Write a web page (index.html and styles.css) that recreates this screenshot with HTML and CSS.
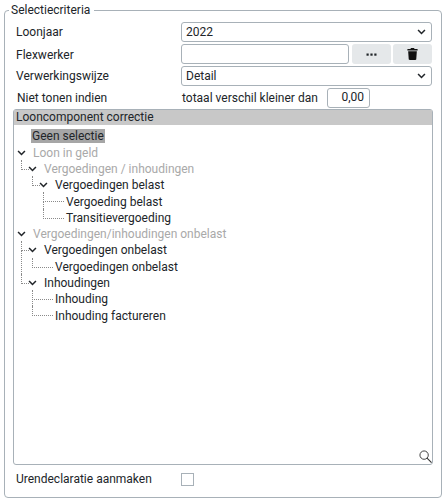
FILE: index.html
```html
<!DOCTYPE html>
<html lang="nl">
<head>
<meta charset="utf-8">
<title>Selectiecriteria</title>
<link rel="stylesheet" href="styles.css">
</head>
<body>
<fieldset class="criteria">
  <legend>Selectiecriteria</legend>
  <div class="rows">
    <div class="row">
      <label class="lbl">Loonjaar</label>
      <div class="select-wrap">
        <select class="field"><option>2022</option></select>
        <svg class="chev" viewBox="0 0 10 7"><path d="M1 1.2 5 5.2 9 1.2" fill="none" stroke="#212529" stroke-width="1.8"/></svg>
      </div>
    </div>
    <div class="row">
      <label class="lbl lbl-low">Flexwerker</label>
      <div class="flex-ctl">
        <input class="field grow" type="text">
        <button class="btn" type="button"><svg width="11" height="3" viewBox="0 0 11 3"><g fill="#212529"><rect x="0.5" y="0.5" width="2.2" height="2.2"/><rect x="4.4" y="0.5" width="2.2" height="2.2"/><rect x="8.3" y="0.5" width="2.2" height="2.2"/></g></svg></button>
        <button class="btn" type="button"><svg width="11" height="12" viewBox="0 0 11 13"><path fill="#111" d="M3.8 0h3.4l.5 1H11v1.6H0V1h3.3zM.8 3.6h9.4l-.6 8.4c0 .6-.5 1-1 1H2.400c-.5 0-1-.4-1-1z"/></svg></button>
      </div>
    </div>
    <div class="row">
      <label class="lbl">Verwerkingswijze</label>
      <div class="select-wrap">
        <select class="field"><option>Detail</option></select>
        <svg class="chev" viewBox="0 0 10 7"><path d="M1 1.200 5 5.200 9 1.200" fill="none" stroke="#212529" stroke-width="1.8"/></svg>
      </div>
    </div>
    <div class="row">
      <label class="lbl lbl-shift">Niet tonen indien</label>
      <div class="flex-ctl">
        <span class="diff">totaal verschil kleiner dan</span>
        <input class="field amount" type="text" value="0,00">
      </div>
    </div>
  </div>
  <section class="panel">
    <header class="panel-head">Looncomponent correctie</header>
    <div class="panel-body">
      <div class="none-row"><span class="none">Geen selectie</span></div>
      <ul class="tree">
        <li><div class="node off"><svg class="tw" viewBox="0 0 10 7"><path d="M1 1.200 5 5.200 9 1.200"/></svg>Loon in geld</div>
          <ul>
            <li class="last"><div class="node off"><svg class="tw" viewBox="0 0 10 7"><path d="M1 1.200 5 5.200 9 1.200"/></svg>Vergoedingen / inhoudingen</div>
              <ul>
                <li class="last"><div class="node"><svg class="tw" viewBox="0 0 10 7"><path d="M1 1.200 5 5.200 9 1.200"/></svg>Vergoedingen belast</div>
                  <ul>
                    <li class="leaf"><div class="node">Vergoeding belast</div></li>
                    <li class="leaf last"><div class="node">Transitievergoeding</div></li>
                  </ul>
                </li>
              </ul>
            </li>
          </ul>
        </li>
        <li><div class="node off"><svg class="tw" viewBox="0 0 10 7"><path d="M1 1.200 5 5.200 9 1.200"/></svg>Vergoedingen/inhoudingen onbelast</div>
          <ul>
            <li><div class="node"><svg class="tw" viewBox="0 0 10 7"><path d="M1 1.200 5 5.200 9 1.200"/></svg>Vergoedingen onbelast</div>
              <ul>
                <li class="leaf last"><div class="node">Vergoedingen onbelast</div></li>
              </ul>
            </li>
            <li class="last"><div class="node"><svg class="tw" viewBox="0 0 10 7"><path d="M1 1.200 5 5.200 9 1.200"/></svg>Inhoudingen</div>
              <ul>
                <li class="leaf"><div class="node">Inhouding</div></li>
                <li class="leaf last"><div class="node">Inhouding factureren</div></li>
              </ul>
            </li>
          </ul>
        </li>
      </ul>
      <svg class="search" width="13" height="13" viewBox="0 0 14 14"><circle cx="5.500" cy="5.500" r="4.500" fill="none" stroke="#333" stroke-width="1"/><path d="M8.700 8.700 13.500 13.500" stroke="#333" stroke-width="1.200"/></svg>
    </div>
  </section>
  <div class="row foot">
    <label class="lbl">Urendeclaratie aanmaken</label>
    <input class="check" type="checkbox">
  </div>
</fieldset>
</body>
</html>
```
FILE: styles.css
```css
* { box-sizing: border-box; }
html, body { margin: 0; padding: 0; background: #fff; }
body {
  width: 447px;
  height: 503px;
  overflow: hidden;
  padding: 3px 5px 5px 4px;
  font: 12px/14px Roboto, "Liberation Sans", sans-serif;
  color: #212529;
}
.criteria {
  margin: 0;
  height: 495px;
  padding: 0 8px 0 8px;
  border: 1px solid #a8b1b8;
  border-radius: 4px;
  display: flex;
  flex-direction: column;
  min-width: 0;
}
.criteria legend {
  margin-left: -4px;
  padding: 0 4px 0 2px;
  font-size: 12px;
  line-height: 14px;
}
.rows {
  display: flex;
  flex-direction: column;
  gap: 2px;
  padding-top: 5px;
}
.row {
  display: flex;
  align-items: center;
  height: 20px;
}
.lbl {
  width: 168px;
  flex: none;
  padding-left: 3px;
}
.lbl-shift { padding-left: 4px; }
.lbl-low { margin-top: 2px; }
.select-wrap {
  position: relative;
  width: 251px;
  height: 20px;
}
.field {
  height: 20px;
  border: 1px solid #a8b1b8;
  border-radius: 3px;
  background: #fff;
  font: inherit;
  color: inherit;
  padding: 0 4px;
  margin: 0;
  outline: none;
}
select.field {
  appearance: none;
  width: 100%;
}
.chev {
  position: absolute;
  right: 6px;
  top: 7px;
  width: 9px;
  height: 6px;
  pointer-events: none;
}
.flex-ctl {
  display: flex;
  align-items: center;
  width: 251px;
  gap: 3px;
}
.grow {
  width: 168px;
  flex: none;
}
.btn {
  width: 39px;
  height: 20px;
  flex: none;
  border: 0;
  border-radius: 3px;
  background: #e5e8ea;
  padding: 0;
  display: flex;
  align-items: center;
  justify-content: center;
}
.btn + .btn { margin-left: -1px; }
.diff {
  width: 143px;
  flex: none;
  padding-left: 1px;
  white-space: nowrap;
}
.amount {
  width: 43px;
  flex: none;
  text-align: right;
  padding: 0 5px 2px 0;
}
.panel {
  margin-top: 1px;
  height: 356px;
  border: 1px solid #a8b1b8;
  border-radius: 3px;
  display: flex;
  flex-direction: column;
}
.panel-head {
  background: #c8c8c8;
  height: 15px;
  line-height: 15px;
  padding-left: 2px;
  flex: none;
}
.panel-body {
  position: relative;
  flex: 1;
  padding-top: 4px;
}
.none-row {
  height: 15.500px;
  padding-left: 17px;
}
.none {
  display: inline-block;
  background: #a6a6a6;
  padding: 0 1px;
  width: 74px;
  height: 14px;
  line-height: 14px;
  white-space: nowrap;
}
.tree, .tree ul {
  list-style: none;
  margin: 0;
  padding: 0;
}
.tree { margin-left: 2px; }
.tree ul { padding-left: 11px; }
.tree li { position: relative; }
.node {
  display: flex;
  align-items: center;
  height: 16.300px;
  white-space: nowrap;
}
.node.off { color: #a9a9a9; }
.tw {
  width: 9px;
  height: 6px;
  flex: none;
  margin: 0 7px 0 1px;
  fill: none;
  stroke: #212529;
  stroke-width: 1.800;
}
.leaf .node { padding-left: 17px; }
.tree ul > li::before {
  content: "";
  position: absolute;
  left: -6px;
  top: -1px;
  width: 7px;
  height: 9px;
  border-left: 1px dotted #8a8a8a;
  border-bottom: 1px dotted #8a8a8a;
}
.tree ul > li.leaf::before { width: 20px; }
.tree ul > li:not(.last)::after {
  content: "";
  position: absolute;
  left: -6px;
  top: 8px;
  bottom: -1px;
  border-left: 1px dotted #8a8a8a;
}
.search {
  position: absolute;
  right: 0;
  bottom: 1px;
}
.foot {
  margin-top: 4px;
}
.check {
  appearance: none;
  width: 13px;
  height: 13px;
  margin: 0;
  border: 1px solid #a8b1b8;
  background: #fff;
}
```
